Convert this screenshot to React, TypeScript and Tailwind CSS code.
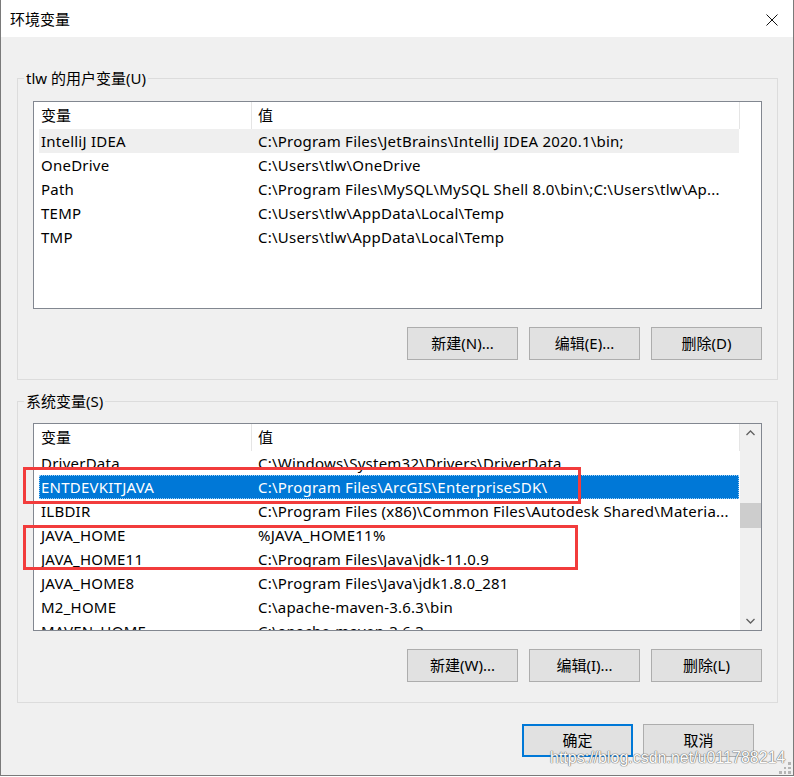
import React from 'react';

type Row = { name: string; value: string; selected?: boolean; soft?: boolean };

const userVars: Row[] = [
  { name: 'IntelliJ IDEA', value: 'C:\\Program Files\\JetBrains\\IntelliJ IDEA 2020.1\\bin;', soft: true },
  { name: 'OneDrive', value: 'C:\\Users\\tlw\\OneDrive' },
  { name: 'Path', value: 'C:\\Program Files\\MySQL\\MySQL Shell 8.0\\bin\\;C:\\Users\\tlw\\Ap...' },
  { name: 'TEMP', value: 'C:\\Users\\tlw\\AppData\\Local\\Temp' },
  { name: 'TMP', value: 'C:\\Users\\tlw\\AppData\\Local\\Temp' },
];

const sysVars: Row[] = [
  { name: 'DriverData', value: 'C:\\Windows\\System32\\Drivers\\DriverData' },
  { name: 'ENTDEVKITJAVA', value: 'C:\\Program Files\\ArcGIS\\EnterpriseSDK\\', selected: true },
  { name: 'ILBDIR', value: 'C:\\Program Files (x86)\\Common Files\\Autodesk Shared\\Materia...' },
  { name: 'JAVA_HOME', value: '%JAVA_HOME11%' },
  { name: 'JAVA_HOME11', value: 'C:\\Program Files\\Java\\jdk-11.0.9' },
  { name: 'JAVA_HOME8', value: 'C:\\Program Files\\Java\\jdk1.8.0_281' },
  { name: 'M2_HOME', value: 'C:\\apache-maven-3.6.3\\bin' },
  { name: 'MAVEN_HOME', value: 'C:\\apache-maven-3.6.3' },
];

function Button({ label, primary }: { label: string; primary?: boolean }) {
  return (
    <div
      className={
        'w-[111px] h-[33px] flex items-center justify-center bg-[#e1e1e1] text-[15px] text-black ' +
        (primary ? 'border-2 border-[#0078d7]' : 'border border-[#adadad]')
      }
    >
      {label}
    </div>
  );
}

function VarList({ rows, scroll }: { rows: Row[]; scroll?: boolean }) {
  return (
    <div className="w-[729px] h-[208px] border border-[#828790] bg-white flex overflow-hidden">
      {/* table area */}
      <div className="w-[706px] flex flex-col overflow-hidden">
        <div className="h-[27px] shrink-0 flex text-[15px] leading-[27px]">
          <div className="w-[218px] pl-[7px] border-r border-[#e5e5e5]">变量</div>
          <div className="flex-1 pl-[6px] border-r border-[#e5e5e5]">值</div>
        </div>
        <div className="pl-[5px] pr-[1px]">
          {rows.map((r) => (
            <div
              key={r.name}
              className={
                'h-[24px] flex text-[15px] leading-[22px] tracking-[0.23px] whitespace-nowrap border ' +
                (r.selected
                  ? 'bg-[#0078d7] text-white border-dotted border-[#9fd0f5]'
                  : r.soft
                    ? 'bg-[#efefef] text-black border-transparent'
                    : 'text-black border-transparent')
              }
            >
              <div className="w-[211px] pl-[1px] overflow-hidden">{r.name}</div>
              <div className="flex-1 pl-[7px] overflow-hidden">{r.value}</div>
            </div>
          ))}
        </div>
      </div>
      {/* scrollbar */}
      {scroll ? (
        <div className="w-[21px] bg-[#f0f0f0] flex flex-col">
          <div className="h-[18px] flex items-center justify-center">
            <svg width="9" height="6" viewBox="0 0 9 6">
              <path d="M0.5 5 L4.5 1 L8.5 5" fill="none" stroke="#606060" strokeWidth="1.3" />
            </svg>
          </div>
          <div className="flex-1">
            <div className="mt-[61px] h-[25px] bg-[#cdcdcd]" />
          </div>
          <div className="h-[18px] flex items-center justify-center">
            <svg width="9" height="6" viewBox="0 0 9 6">
              <path d="M0.5 1 L4.5 5 L8.5 1" fill="none" stroke="#606060" strokeWidth="1.3" />
            </svg>
          </div>
        </div>
      ) : (
        <div className="w-[21px]" />
      )}
    </div>
  );
}

export default function App() {
  return (
    <div className="relative w-[794px] h-[777px] bg-white overflow-hidden text-black font-['Segoe_UI','Noto_Sans','Noto_Sans_CJK_SC',sans-serif]">
      <div className="h-[776px] flex flex-col border-x border-b border-[#7a7a7a]">
        {/* Title bar */}
        <div className="h-[37px] shrink-0 bg-white flex items-center justify-between pl-[9px] pr-[15px] pt-[2px]">
          <span className="text-[15px]">环境变量</span>
          <svg width="12" height="12" viewBox="0 0 12 12">
            <path d="M0.5 0.5 L11.5 11.5 M11.5 0.5 L0.5 11.5" stroke="#111" strokeWidth="1" />
          </svg>
        </div>

        {/* Body */}
        <div className="flex-1 bg-[#f0f0f0] pl-[16px] flex flex-col">
          <fieldset className="mt-[31px] w-[761px] border border-[#dcdcdc]">
            <legend className="ml-[6px] px-[2px] text-[15px] leading-[20px]">tlw 的用户变量(U)</legend>
            <div className="pt-[13px] pl-[15px] pb-[19px]">
              <VarList rows={userVars} />
              <div className="mt-[18px] mr-[15px] flex justify-end gap-[11px]">
                <Button label="新建(N)..." />
                <Button label="编辑(E)..." />
                <Button label="删除(D)" />
              </div>
            </div>
          </fieldset>

          <fieldset className="mt-[11px] w-[761px] border border-[#dcdcdc]">
            <legend className="ml-[6px] px-[2px] text-[15px] leading-[20px]">系统变量(S)</legend>
            <div className="pt-[12px] pl-[15px] pb-[20px]">
              <VarList rows={sysVars} scroll />
              <div className="mt-[18px] mr-[15px] flex justify-end gap-[11px]">
                <Button label="新建(W)..." />
                <Button label="编辑(I)..." />
                <Button label="删除(L)" />
              </div>
            </div>
          </fieldset>

          <div className="mt-[21px] pl-[505px] flex gap-[10px]">
            <Button label="确定" primary />
            <Button label="取消" />
          </div>
        </div>
      </div>

      {/* annotation boxes */}
      <div className="absolute left-[23px] top-[467px] w-[558px] h-[37px] border-[3px] border-[#f23c3c]" />
      <div className="absolute left-[23px] top-[525px] w-[555px] h-[45px] border-[3px] border-[#f23c3c]" />

      {/* watermark */}
      <div className="absolute left-[550px] top-[747px] text-[16px] leading-[22px] text-[#fcfcfc] font-['Liberation_Sans',Arial,sans-serif] [text-shadow:0_0_1px_#6e6e6e,0_0_1px_#6e6e6e,0_0_1px_#6e6e6e]">
        https://blog.csdn.net/u011788214
      </div>

      {/* resize grip */}
      <div className="absolute left-[779px] top-[762px] w-[12px] h-[12px] grid grid-cols-3 grid-rows-3 gap-[2px]">
        <span />
        <span />
        <span className="bg-[#b5b5b5]" />
        <span />
        <span className="bg-[#b5b5b5]" />
        <span className="bg-[#b5b5b5]" />
        <span className="bg-[#b5b5b5]" />
        <span className="bg-[#b5b5b5]" />
        <span className="bg-[#b5b5b5]" />
      </div>
    </div>
  );
}
